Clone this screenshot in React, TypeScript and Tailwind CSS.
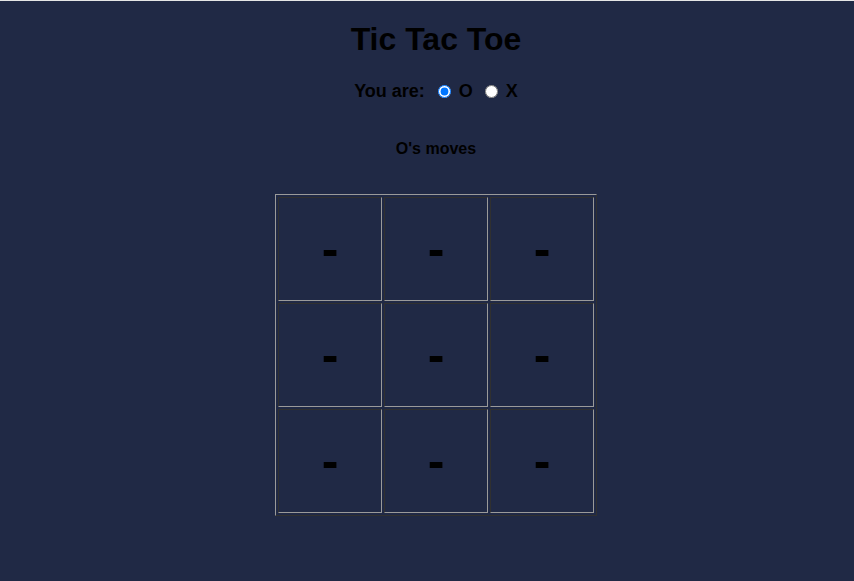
import React, { useState } from 'react';

const App: React.FC = () => {
  const [player, setPlayer] = useState<'O' | 'X'>('O');
  const [board] = useState<string[]>(Array(9).fill('-'));

  const rows = [0, 1, 2].map(r => board.slice(r * 3, r * 3 + 3));

  return (
    <div className="min-h-screen bg-[#202945] border-t border-[#e6e6e6] text-black font-['Liberation_Sans',Arial,sans-serif]">
      <div className="flex flex-col items-center pl-[18px]">
        <h1 className="mt-[20px] text-[32px] leading-[37px] font-bold">Tic Tac Toe</h1>

        <div className="mt-[23px] flex items-center text-[18px] leading-[21px] font-bold">
          <span>You are:</span>
          <input
            type="radio"
            name="player"
            checked={player === 'O'}
            onChange={() => setPlayer('O')}
            className="ml-[13px] w-[13px] h-[13px] m-0"
          />
          <span className="ml-[8px]">O</span>
          <input
            type="radio"
            name="player"
            checked={player === 'X'}
            onChange={() => setPlayer('X')}
            className="ml-[12px] w-[13px] h-[13px] m-0"
          />
          <span className="ml-[8px]">X</span>
        </div>

        <p className="mt-[38px] text-[16px] leading-[18px] font-bold">{player}'s moves</p>

        <table className="mt-[36px] border-separate border-spacing-[2px] border border-t-[#9a9a9a] border-l-[#9a9a9a] border-r-[#303030] border-b-[#303030]">
          <tbody>
            {rows.map((row, ri) => (
              <tr key={ri}>
                {row.map((cell, ci) => (
                  <td
                    key={ci}
                    className="w-[104px] h-[104px] p-0 text-center align-middle text-[50px] leading-[50px] font-bold border border-t-[#303030] border-l-[#303030] border-r-[#9a9a9a] border-b-[#9a9a9a]"
                  >
                    {cell}
                  </td>
                ))}
              </tr>
            ))}
          </tbody>
        </table>
      </div>
    </div>
  );
};

export default App;
